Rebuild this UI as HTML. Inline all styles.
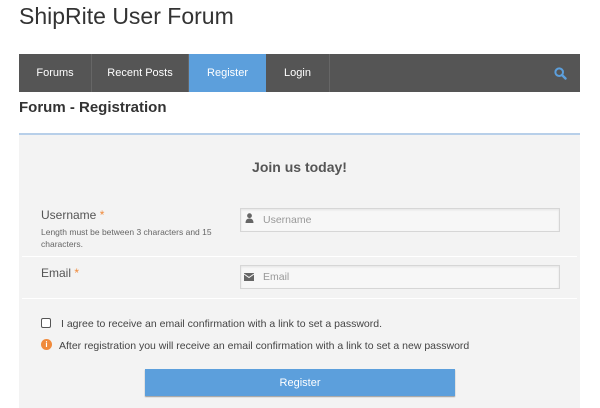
<!DOCTYPE html>
<html><head><style>
*{margin:0;padding:0;box-sizing:border-box}
body{width:600px;height:408px;background:#fff;font-family:"Liberation Sans",sans-serif;color:#444;position:relative;overflow:hidden}
.a{position:absolute}
.nav{left:19px;top:54px;width:561px;height:38px;background:#555}
.nav div{position:absolute;top:0;height:38px;line-height:39px;color:#fff;font-size:11px;text-align:center;border-right:1px solid #666}
.inp{background:#f7f7f7;border:1px solid #d6d6d6;box-shadow:inset 0 1px 2px #e4e4e4;font-size:10.5px;color:#999;padding-left:22px;line-height:23px}
</style></head><body>
<div class="a" style="left:19px;top:3px;font-size:23px;color:#333">ShipRite User Forum</div>
<div class="a nav">
 <div style="left:0;width:73px">Forums</div>
 <div style="left:73px;width:97px">Recent Posts</div>
 <div style="left:170px;width:77px;background:#5c9fdc;border-right:none">Register</div>
 <div style="left:247px;width:64px">Login</div>
 <svg class="a" style="left:535px;top:13px" width="13" height="13" viewBox="0 0 13 13"><circle cx="5.2" cy="5.2" r="3.8" fill="none" stroke="#5c9fdc" stroke-width="2"/><line x1="8" y1="8" x2="11.5" y2="11.5" stroke="#5c9fdc" stroke-width="2.4" stroke-linecap="round"/></svg>
</div>
<div class="a" style="left:19px;top:99px;font-size:15px;font-weight:bold;color:#333">Forum - Registration</div>
<div class="a" style="left:19px;top:133px;width:561px;height:2px;background:#b7cfe9"></div>
<div class="a" style="left:19px;top:135px;width:561px;height:273px;background:#f3f3f3"></div>
<div class="a" style="left:19px;top:159px;width:561px;text-align:center;font-size:14px;font-weight:bold;color:#555">Join us today!</div>
<div class="a" style="left:41px;top:208px;font-size:12px;color:#555">Username <span style="color:#f08a3b">*</span></div>
<div class="a" style="left:41px;top:226px;font-size:8.5px;color:#666;line-height:12px;width:190px">Length must be between 3 characters and 15 characters.</div>
<div class="a inp" style="left:240px;top:208px;width:320px;height:24px">Username</div>
<svg class="a" style="left:245px;top:213px" width="9" height="10" viewBox="0 0 9 10"><circle cx="4.5" cy="2.7" r="2.4" fill="#666"/><path d="M0.5 10 Q0.5 5.5 4.5 5.5 Q8.5 5.5 8.5 10Z" fill="#666"/></svg>
<div class="a" style="left:22px;top:256px;width:555px;height:1px;background:#fff"></div>
<div class="a" style="left:41px;top:266px;font-size:12px;color:#555">Email <span style="color:#f08a3b">*</span></div>
<div class="a inp" style="left:240px;top:265px;width:320px;height:24px">Email</div>
<svg class="a" style="left:244px;top:273px" width="10" height="8" viewBox="0 0 10 8"><rect width="10" height="8" fill="#666"/><path d="M0 1 L5 4.5 L10 1" fill="none" stroke="#f7f7f7" stroke-width="1"/></svg>
<div class="a" style="left:22px;top:298px;width:555px;height:1px;background:#fff"></div>
<div class="a" style="left:41px;top:318px;width:10px;height:10px;border:1px solid #555;border-radius:2px;background:#fff"></div>
<div class="a" style="left:61px;top:318px;font-size:10.5px;color:#444">I agree to receive an email confirmation with a link to set a password.</div>
<div class="a" style="left:41px;top:339px;width:11px;height:11px;border-radius:50%;background:#f08a3b;color:#fff;font-size:8px;font-weight:bold;text-align:center;line-height:11px">i</div>
<div class="a" style="left:59px;top:340px;font-size:10.5px;color:#444">After registration you will receive an email confirmation with a link to set a new password</div>
<div class="a" style="left:145px;top:369px;width:310px;height:27px;background:#5c9fdc;color:#fff;font-size:11px;text-align:center;line-height:28px;box-shadow:0 1px 1px #999">Register</div>
</body></html>
